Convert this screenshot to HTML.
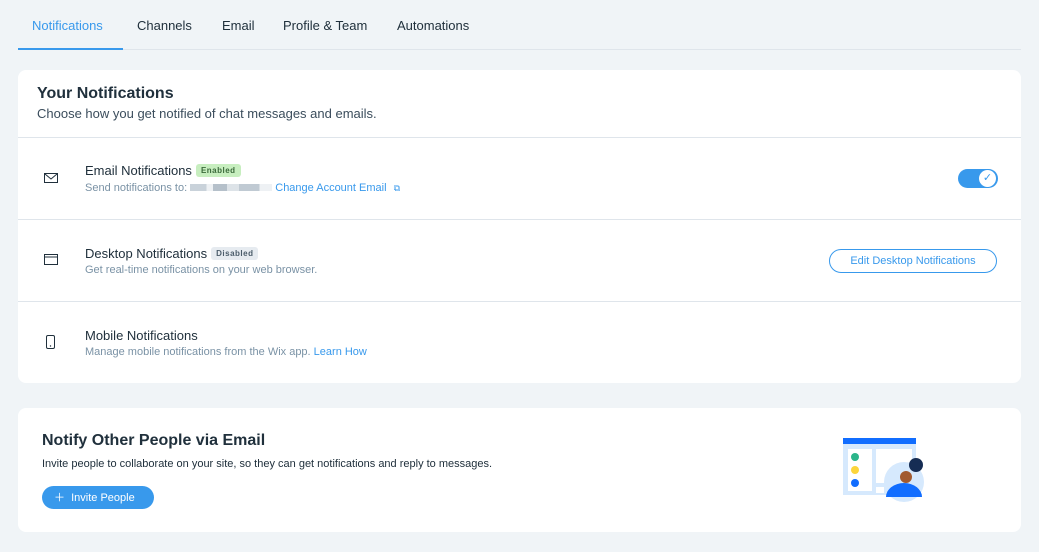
<!DOCTYPE html>
<html><head><style>
*{margin:0;padding:0;box-sizing:border-box}
body{width:1039px;height:552px;background:#f0f4f7;font-family:"Liberation Sans",sans-serif;color:#20303c;position:relative;overflow:hidden}
.a{position:absolute}
.tab{position:absolute;top:18px;font-size:13px;color:#20303c}
.card{position:absolute;left:18px;width:1003px;background:#fff;border-radius:8px}
.div{position:absolute;left:0;width:1003px;height:1px;background:#dfe5eb}
.t{position:absolute;font-size:13px;color:#20303c}
.s{position:absolute;font-size:11px;color:#7a92a5}
.lnk{color:#3899ec}
.badge{display:inline-block;font-size:8px;font-weight:bold;letter-spacing:.5px;padding:2px 5px;border-radius:3px;vertical-align:2px;margin-left:4px}
</style></head><body>
<div class="tab" style="left:32px;color:#3899ec">Notifications</div>
<div class="tab" style="left:137px">Channels</div>
<div class="tab" style="left:222px">Email</div>
<div class="tab" style="left:283px">Profile &amp; Team</div>
<div class="tab" style="left:397px">Automations</div>
<div class="a" style="left:18px;top:49px;width:1003px;height:1px;background:#dfe5eb"></div>
<div class="a" style="left:18px;top:48px;width:105px;height:2px;background:#3899ec"></div>

<div class="card" style="top:70px;height:313px">
 <div class="t" style="left:19px;top:15px;font-size:16px;font-weight:bold">Your Notifications</div>
 <div class="t" style="left:19px;top:36px;font-size:13px;color:#3b4d5c">Choose how you get notified of chat messages and emails.</div>
 <div class="div" style="top:67px"></div>
 <svg class="a" style="left:26px;top:103px" width="14" height="10"><rect x=".5" y=".5" width="13" height="9" fill="none" stroke="#20303c"/><path d="M1 1l6 5 6-5" fill="none" stroke="#20303c"/></svg>
 <div class="t" style="left:67px;top:93px">Email Notifications<span class="badge" style="background:#c7eebf;color:#3b6a3b">Enabled</span></div>
 <div class="s" style="left:67px;top:112px">Send notifications to: <span style="display:inline-block;width:82px;height:7px;background:linear-gradient(90deg,#c9d2da 0 20%,#eef1f4 20% 28%,#b5c0ca 28% 45%,#dde3e8 45% 60%,#c0cad3 60% 85%,#eef1f4 85%);vertical-align:0"></span> <span class="lnk">Change Account Email</span> <span class="lnk" style="margin-left:4px;font-size:9px">⧉</span></div>
 <div class="a" style="left:940px;top:99px;width:40px;height:19px;border-radius:10px;background:#3899ec"></div>
 <div class="a" style="left:961px;top:100px;width:17px;height:17px;border-radius:50%;background:#fff;color:#3899ec;font-size:11px;text-align:center;line-height:17px">✓</div>
 <div class="div" style="top:149px"></div>
 <svg class="a" style="left:26px;top:184px" width="14" height="11"><rect x=".5" y=".5" width="13" height="10" fill="none" stroke="#20303c"/><path d="M1 3h12" stroke="#20303c"/></svg>
 <div class="t" style="left:67px;top:176px">Desktop Notifications<span class="badge" style="background:#e6ebf0;color:#4a5b69">Disabled</span></div>
 <div class="s" style="left:67px;top:194px">Get real-time notifications on your web browser.</div>
 <div class="a" style="left:811px;top:179px;width:168px;height:24px;border:1px solid #3899ec;border-radius:12px;color:#3899ec;font-size:11px;text-align:center;line-height:22px">Edit Desktop Notifications</div>
 <div class="div" style="top:231px"></div>
 <svg class="a" style="left:28px;top:265px" width="9" height="14"><rect x=".5" y=".5" width="8" height="13" rx="1.5" fill="none" stroke="#20303c"/><circle cx="4.5" cy="11" r=".7" fill="#20303c"/></svg>
 <div class="t" style="left:67px;top:258px">Mobile Notifications</div>
 <div class="s" style="left:67px;top:276px">Manage mobile notifications from the Wix app. <span class="lnk">Learn How</span></div>
</div>

<div class="card" style="top:408px;height:124px">
 <div class="t" style="left:24px;top:24px;font-size:16px;font-weight:bold">Notify Other People via Email</div>
 <div class="t" style="left:24px;top:50px;font-size:11px;color:#20303c">Invite people to collaborate on your site, so they can get notifications and reply to messages.</div>
 <div class="a" style="left:24px;top:78px;width:112px;height:23px;border-radius:12px;background:#3899ec;color:#fff;font-size:11px;line-height:24px;padding-left:12px">＋&nbsp; Invite People</div>
 <svg class="a" style="left:822px;top:27px" width="110" height="70">
  <rect x="3" y="3" width="73" height="57" fill="#d6e9fd"/>
  <rect x="3" y="3" width="73" height="6" fill="#116dff"/>
  <rect x="8" y="14" width="24" height="42" fill="#fff"/>
  <rect x="36" y="14" width="36" height="34" fill="#fff"/>
  <rect x="36" y="52" width="8" height="6" fill="#fff"/>
  <circle cx="15" cy="22" r="4" fill="#2bb58a"/><circle cx="15" cy="35" r="4" fill="#fcd53b"/><circle cx="15" cy="48" r="4" fill="#116dff"/>
  <circle cx="64" cy="47" r="20" fill="#d6e9fd"/>
  <circle cx="76" cy="30" r="7" fill="#162d54"/>
  <circle cx="66" cy="42" r="6" fill="#a15a30"/>
  <path d="M46 62a18 14 0 0 1 36 0z" fill="#116dff"/>
 </svg>
</div>
</body></html>
